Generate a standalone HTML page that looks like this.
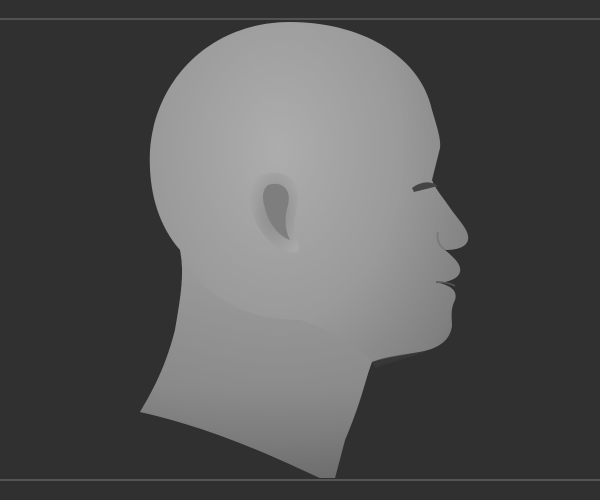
<!DOCTYPE html>
<html><head><style>
html,body{margin:0;padding:0;background:#303030;width:600px;height:500px;overflow:hidden}
</style></head><body>
<svg width="600" height="500" viewBox="0 0 600 500" xmlns="http://www.w3.org/2000/svg">
<defs>
<radialGradient id="g" cx="0.42" cy="0.28" r="0.75">
<stop offset="0" stop-color="#adadad"/>
<stop offset="0.5" stop-color="#9a9a9a"/>
<stop offset="0.85" stop-color="#808080"/>
<stop offset="1" stop-color="#666"/>
</radialGradient>
<linearGradient id="n" x1="0" y1="0" x2="0" y2="1">
<stop offset="0" stop-color="#9a9a9a"/>
<stop offset="0.6" stop-color="#8c8c8c"/>
<stop offset="1" stop-color="#6e6e6e"/>
</linearGradient>
<radialGradient id="e" cx="0.5" cy="0.5" r="0.6">
<stop offset="0" stop-color="#8a8a8a"/>
<stop offset="1" stop-color="#a8a8a8"/>
</radialGradient>
</defs>
<rect width="600" height="500" fill="#303030"/>
<rect x="0" y="18" width="600" height="2" fill="#525252"/>
<rect x="0" y="479" width="600" height="2" fill="#555"/>
<path d="M290 22 C360 22 420 55 432 110 C438 130 441 140 440 148 L432 180 C436 190 442 196 448 205 C458 220 470 230 468 240 C466 248 455 250 445 250 C452 256 462 264 460 272 C458 280 445 282 440 283 C450 286 458 290 455 300 C450 310 452 318 452 326 C450 340 440 348 420 352 C400 356 385 358 372 362 C365 380 362 400 345 440 L335 478 L320 478 C280 460 220 430 140 412 C150 395 165 370 175 330 C180 300 185 275 180 250 C158 225 148 190 150 150 C155 80 210 22 290 22 Z" fill="url(#g)"/>
<path d="M180 250 C200 300 250 320 300 320 C330 330 360 345 372 362 C365 380 362 400 345 440 L335 478 L320 478 C280 460 220 430 140 412 C150 395 165 370 175 330 C180 300 185 275 180 250 Z" fill="url(#n)" opacity="0.75"/>
<path d="M372 362 C385 356 410 354 430 350 C410 358 390 362 375 368 Z" fill="#3a3a3a" opacity="0.7"/>
<path d="M262 175 C282 168 300 178 298 200 C296 215 292 225 296 238 C302 248 300 255 290 252 C272 248 258 232 252 212 C248 195 250 180 262 175 Z" fill="url(#e)"/>
<path d="M268 185 C282 180 292 190 288 205 C285 215 284 228 290 240 C278 236 268 222 265 208 C262 198 262 190 268 185 Z" fill="#7e7e7e"/>
<path d="M412 188 C420 182 430 180 438 186 C430 188 422 190 414 192 Z" fill="#444"/>
<path d="M436 282 C445 282 452 284 455 286" stroke="#555" stroke-width="1.5" fill="none"/>
<path d="M445 250 C440 246 436 240 438 232" stroke="#7a7a7a" stroke-width="2" fill="none"/>
</svg>
</body></html>
